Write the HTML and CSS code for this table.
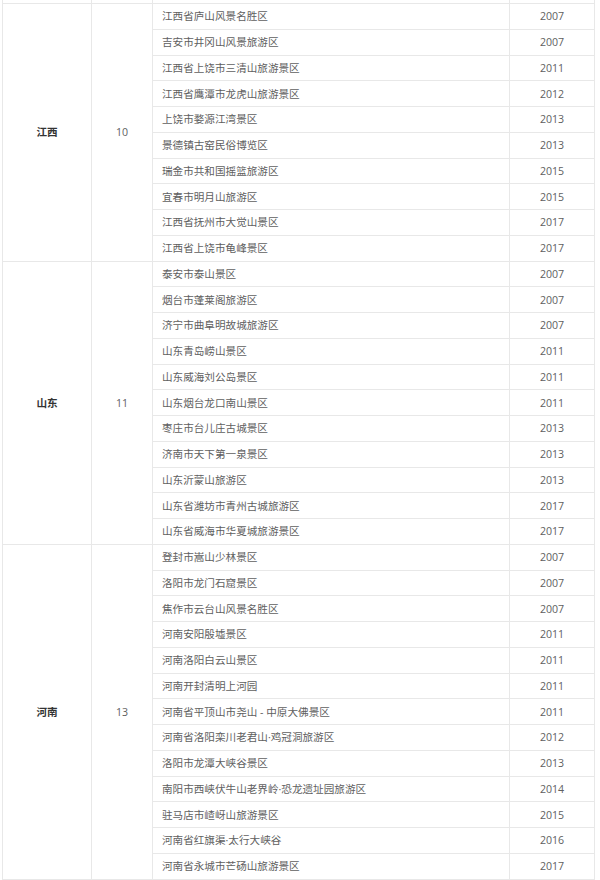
FILE: index.html
```html
<!DOCTYPE html>
<html lang="zh-CN">
<head>
<meta charset="utf-8">
<title>5A景区列表</title>
<link rel="stylesheet" href="styles.css">
</head>
<body>
<div class="page">
<table class="scenic">
<colgroup>
<col class="c-prov"><col class="c-num"><col class="c-name"><col class="c-year">
</colgroup>
<tbody>
<tr class="partial"><td></td><td></td><td></td><td></td></tr>
<tr><td class="prov" rowspan="10">江西</td><td class="num" rowspan="10">10</td><td class="name">江西省庐山风景名胜区</td><td class="year">2007</td></tr>
<tr><td class="name">吉安市井冈山风景旅游区</td><td class="year">2007</td></tr>
<tr><td class="name">江西省上饶市三清山旅游景区</td><td class="year">2011</td></tr>
<tr><td class="name">江西省鹰潭市龙虎山旅游景区</td><td class="year">2012</td></tr>
<tr><td class="name">上饶市婺源江湾景区</td><td class="year">2013</td></tr>
<tr><td class="name">景德镇古窑民俗博览区</td><td class="year">2013</td></tr>
<tr><td class="name">瑞金市共和国摇篮旅游区</td><td class="year">2015</td></tr>
<tr><td class="name">宜春市明月山旅游区</td><td class="year">2015</td></tr>
<tr><td class="name">江西省抚州市大觉山景区</td><td class="year">2017</td></tr>
<tr><td class="name">江西省上饶市龟峰景区</td><td class="year">2017</td></tr>
<tr><td class="prov" rowspan="11">山东</td><td class="num" rowspan="11">11</td><td class="name">泰安市泰山景区</td><td class="year">2007</td></tr>
<tr><td class="name">烟台市蓬莱阁旅游区</td><td class="year">2007</td></tr>
<tr><td class="name">济宁市曲阜明故城旅游区</td><td class="year">2007</td></tr>
<tr><td class="name">山东青岛崂山景区</td><td class="year">2011</td></tr>
<tr><td class="name">山东威海刘公岛景区</td><td class="year">2011</td></tr>
<tr><td class="name">山东烟台龙口南山景区</td><td class="year">2011</td></tr>
<tr><td class="name">枣庄市台儿庄古城景区</td><td class="year">2013</td></tr>
<tr><td class="name">济南市天下第一泉景区</td><td class="year">2013</td></tr>
<tr><td class="name">山东沂蒙山旅游区</td><td class="year">2013</td></tr>
<tr><td class="name">山东省潍坊市青州古城旅游区</td><td class="year">2017</td></tr>
<tr><td class="name">山东省威海市华夏城旅游景区</td><td class="year">2017</td></tr>
<tr><td class="prov" rowspan="13">河南</td><td class="num" rowspan="13">13</td><td class="name">登封市嵩山少林景区</td><td class="year">2007</td></tr>
<tr><td class="name">洛阳市龙门石窟景区</td><td class="year">2007</td></tr>
<tr><td class="name">焦作市云台山风景名胜区</td><td class="year">2007</td></tr>
<tr><td class="name">河南安阳殷墟景区</td><td class="year">2011</td></tr>
<tr><td class="name">河南洛阳白云山景区</td><td class="year">2011</td></tr>
<tr><td class="name">河南开封清明上河园</td><td class="year">2011</td></tr>
<tr><td class="name">河南省平顶山市尧山 - 中原大佛景区</td><td class="year">2011</td></tr>
<tr><td class="name">河南省洛阳栾川老君山·鸡冠洞旅游区</td><td class="year">2012</td></tr>
<tr><td class="name">洛阳市龙潭大峡谷景区</td><td class="year">2013</td></tr>
<tr><td class="name">南阳市西峡伏牛山老界岭·恐龙遗址园旅游区</td><td class="year">2014</td></tr>
<tr><td class="name">驻马店市嵖岈山旅游景区</td><td class="year">2015</td></tr>
<tr><td class="name">河南省红旗渠·太行大峡谷</td><td class="year">2016</td></tr>
<tr><td class="name">河南省永城市芒砀山旅游景区</td><td class="year">2017</td></tr>
</tbody>
</table>
</div>
</body>
</html>
```

FILE: styles.css
```css
html, body {
  margin: 0;
  padding: 0;
  background: #fff;
}

.page {
  padding-left: 2px;
  height: 880px;
  overflow: hidden;
}

.scenic {
  border-collapse: collapse;
  table-layout: fixed;
  width: 592px;
  font-family: "Open Sans", "Noto Sans CJK SC", sans-serif;
  font-size: 10.6px;
  color: #606060;
}

.c-prov { width: 89px; }
.c-num { width: 61px; }
.c-name { width: 357px; }
.c-year { width: 85px; }

.scenic tr {
  height: 25.75px;
}

.scenic tr.partial {
  height: 3px;
}

.scenic td {
  border: 1px solid #e8e8e8;
  padding: 0;
  vertical-align: middle;
  line-height: 14px;
}

.scenic tr.partial td {
  border-top: none;
  height: 3px;
}

.prov {
  text-align: center;
  font-weight: bold;
  color: #333;
}

.num {
  text-align: center;
}

.name {
  padding-left: 9px !important;
  white-space: nowrap;
}

.year {
  text-align: center;
}
```
